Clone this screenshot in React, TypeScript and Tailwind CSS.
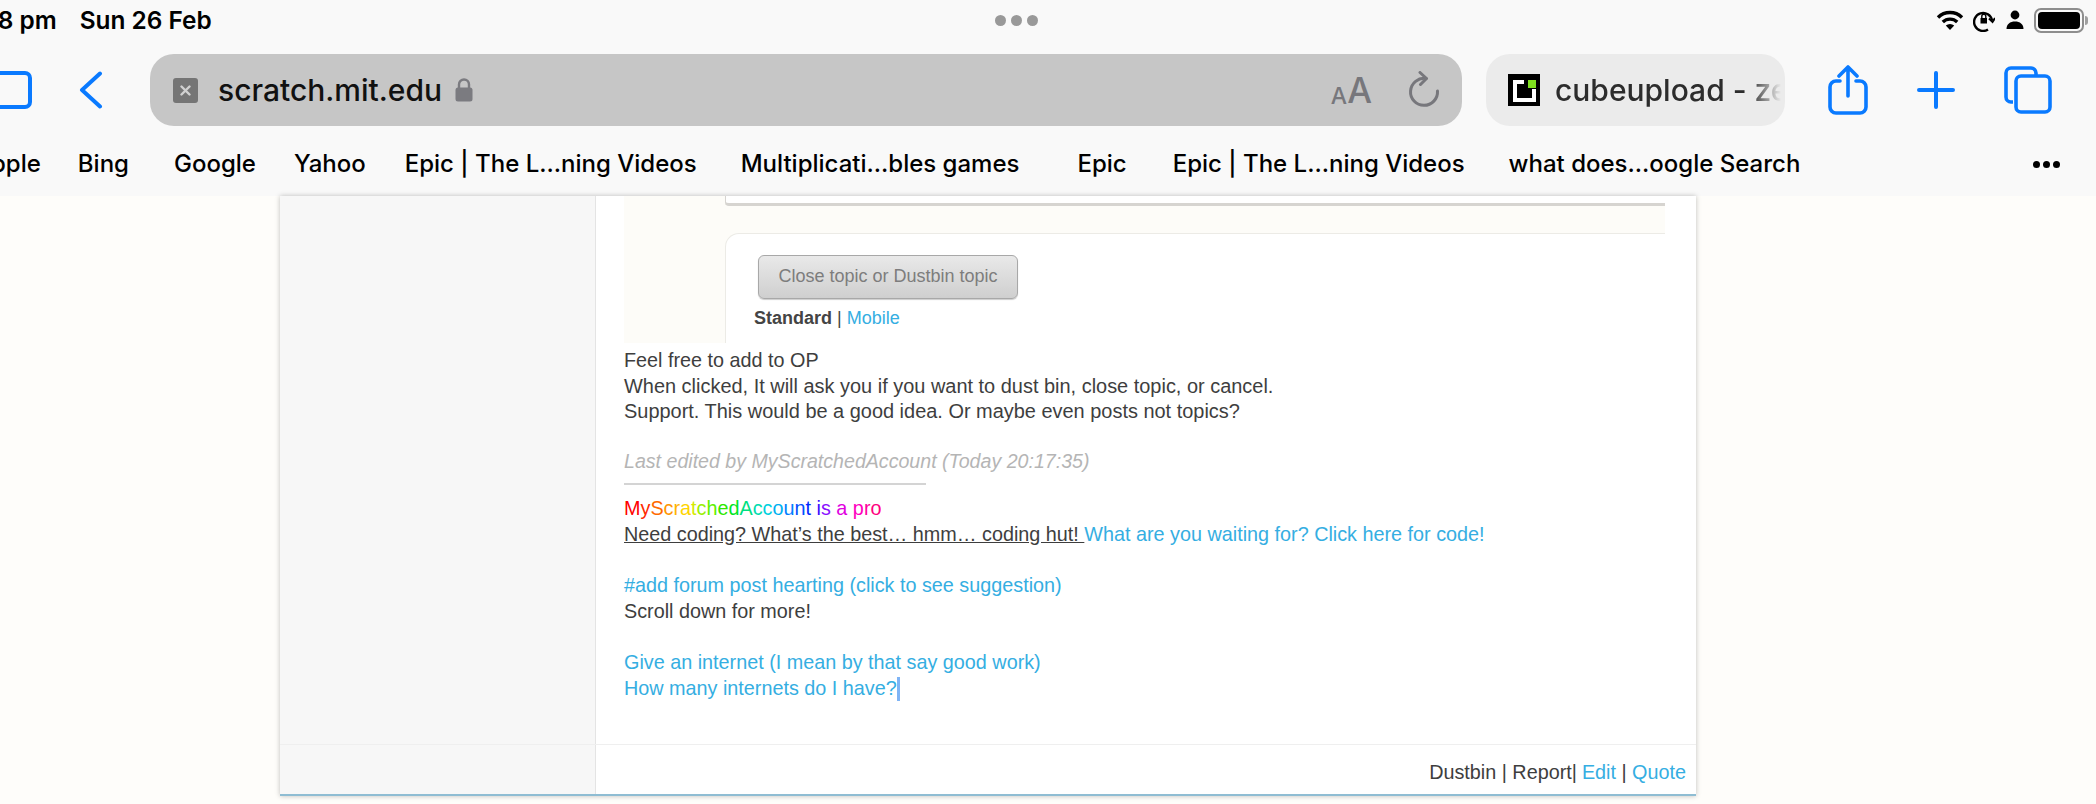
import React from 'react'

const blue = '#0a7aff'

// rainbow signature, one colour per letter
const rainbow: [string, string][] = [
    ['M', '#ff0000'], ['y', '#ff2a00'], ['S', '#ff6a00'], ['c', '#ff9500'], ['r', '#ffb400'], ['a', '#ffd500'], ['t', '#d5ea00'],
    ['c', '#9bf000'], ['h', '#5ff000'], ['e', '#2fe800'], ['d', '#00e61e'], ['A', '#00e080'], ['c', '#00dcb0'], ['c', '#00d0e0'],
    ['o', '#00b0f0'], ['u', '#0080ff'], ['n', '#0050ff'], ['t', '#0028ff'], [' ', '#000'], ['i', '#3a10ff'], ['s', '#8a10ff'],
    [' ', '#000'], ['a', '#e000e0'], [' ', '#000'], ['p', '#ff00c0'], ['r', '#ff00a0'], ['o', '#ff0080'],
]

const bookmarks = [
    { label: 'Bing', cls: 'ml-[37px]' },
    { label: 'Google', cls: 'ml-[45px]' },
    { label: 'Yahoo', cls: 'ml-[38px]' },
    { label: 'Epic | The L...ning Videos', cls: 'ml-[39px]' },
    { label: 'Multiplicati...bles games', cls: 'ml-[44px]' },
    { label: 'Epic', cls: 'ml-[58px]' },
    { label: 'Epic | The L...ning Videos', cls: 'ml-[46px]' },
    { label: 'what does...oogle Search', cls: 'ml-[44px]' },
]

function StatusBar() {
    return (
        <div className="relative flex h-[40px] items-center justify-between overflow-hidden">
            <div className="ml-[-36px] flex items-center gap-[23px] text-[24.4px] font-semibold text-black">
                <span>8:18 pm</span>
                <span>Sun 26 Feb</span>
            </div>
            <div className="absolute left-[995px] top-[15px] flex gap-[5px]">
                <span className="h-[11px] w-[11px] rounded-full bg-[#999]" />
                <span className="h-[11px] w-[11px] rounded-full bg-[#999]" />
                <span className="h-[11px] w-[11px] rounded-full bg-[#999]" />
            </div>
            <div className="mr-[8px] flex items-center">
                <svg width="28" height="22" viewBox="0 0 28 22" fill="none" stroke="black" strokeWidth="3.4" strokeLinecap="butt">
                    <path d="M2 8.5a17 17 0 0 1 24 0" />
                    <path d="M6.8 13a10.4 10.4 0 0 1 14.4 0" />
                    <path d="M14 21l-4.2-4.4a6 6 0 0 1 8.4 0z" fill="black" stroke="none" />
                </svg>
                <svg className="ml-[9px]" width="22" height="24" viewBox="0 0 22 24" fill="none" stroke="black" strokeWidth="2.4">
                    <path d="M15 21.5a9 9 0 1 1 4-9" />
                    <path d="M16 10.5l3.5 3.5 2.5-4" strokeWidth="2" />
                    <rect x="7.5" y="10" width="6.5" height="5.5" fill="black" stroke="none" />
                    <path d="M8.8 10V8.2a2 2 0 0 1 4 0V10" strokeWidth="1.4" />
                </svg>
                <svg className="ml-[11px]" width="18" height="20" viewBox="0 0 18 20" fill="black">
                    <circle cx="9" cy="5" r="4.4" />
                    <path d="M0.5 19c0-5 3.6-7.6 8.5-7.6s8.500 2.600 8.500 7.600z" />
                </svg>
                <div className="ml-[10px] flex items-center">
                    <div className="flex h-[25px] w-[50px] items-center rounded-[7px] border-2 border-[#8e8e8e] p-[2px]">
                        <div className="h-full w-full rounded-[4px] bg-black" />
                    </div>
                    <div className="ml-[1px] h-[9px] w-[3px] rounded-r-full bg-[#a0a0a0]" />
                </div>
            </div>
        </div>
    )
}

function CubeFavicon() {
    return (
        <svg width="32" height="32" viewBox="0 0 32 32" className="shrink-0">
            <rect width="32" height="32" fill="#000" />
            <path d="M16 8H7v18h19V15" fill="none" stroke="#fff" strokeWidth="4" />
            <rect x="20" y="6" width="8" height="8" fill="#7fe01f" />
        </svg>
    )
}

function AddressRow() {
    return (
        <div className="mt-[14px] flex h-[72px] items-center">
            <div className="ml-[-14px] h-[38px] w-[46px] rounded-[7px] border-[4px] border-[#0a7aff]" />
            <svg className="ml-[47px]" width="24" height="38" viewBox="0 0 24 38" fill="none" stroke={blue} strokeWidth="4" strokeLinecap="round" strokeLinejoin="round">
                <path d="M21 2.500 3 19l18 16.500" />
            </svg>
            <div className="ml-[47px] flex h-[72px] w-[1312px] items-center rounded-[24px] bg-[#c6c6c6] pl-[23px] pr-[22px]">
                <div className="flex h-[25px] w-[25px] items-center justify-center rounded-[3px] bg-[#757575]">
                    <svg width="11" height="11" viewBox="0 0 11 11" stroke="#d0d0d0" strokeWidth="2.4" strokeLinecap="round">
                        <path d="M1.500 1.500l8 8M9.500 1.500l-8 8" />
                    </svg>
                </div>
                <span className="ml-[20px] text-[30px] font-medium leading-none text-[#111]">scratch.mit.edu</span>
                <svg className="ml-[13px]" width="18" height="24" viewBox="0 0 18 24" fill="#7b7b80">
                    <rect x="0.500" y="9.500" width="17" height="14" rx="2.500" />
                    <path d="M4 10V6.500a5 5 0 0 1 10 0V10" fill="none" stroke="#7b7b80" strokeWidth="2.400" />
                </svg>
                <div className="ml-auto flex items-end font-medium leading-none text-[#77777c]">
                    <span className="text-[23px]">A</span>
                    <span className="text-[35px]">A</span>
                </div>
                <svg className="ml-[36px]" width="32" height="38" viewBox="0 0 32 38" fill="none" stroke="#77777c" strokeWidth="3" strokeLinecap="round" strokeLinejoin="round">
                    <path d="M18 7.500A13.500 13.500 0 1 0 29.500 20" />
                    <path d="M12 1.500l6.500 6-6 6" />
                </svg>
            </div>
            <div className="ml-[24px] flex h-[72px] w-[299px] items-center overflow-hidden rounded-[24px] bg-[#ebebeb] pl-[22px]">
                <CubeFavicon />
                <span className="ml-[15px] w-[226px] overflow-hidden whitespace-nowrap text-[30px] font-medium leading-[38px] text-[#2c2c2c] [mask-image:linear-gradient(to_right,black_86%,transparent_100%)]">cubeupload - zeq</span>
            </div>
            <svg className="ml-[43px]" width="40" height="50" viewBox="0 0 40 50" fill="none" stroke={blue} strokeWidth="3.600" strokeLinecap="round" strokeLinejoin="round">
                <path d="M12 16H8a6 6 0 0 0-6 6v20a6 6 0 0 0 6 6h24a6 6 0 0 0 6-6V22a6 6 0 0 0-6-6h-4" />
                <path d="M20 31V3M11 11l9-9 9 9" />
            </svg>
            <svg className="ml-[49px]" width="38" height="38" viewBox="0 0 38 38" stroke={blue} strokeWidth="4" strokeLinecap="round">
                <path d="M19 2v34M2 19h34" />
            </svg>
            <svg className="ml-[49px]" width="48" height="48" viewBox="0 0 48 48" fill="none" stroke={blue} strokeWidth="3.600" strokeLinejoin="round">
                <path d="M9 36H7a5 5 0 0 1-5-5V7a5 5 0 0 1 5-5h20a5 5 0 0 1 5 5v3" />
                <rect x="12" y="10" width="34" height="36" rx="5" />
            </svg>
        </div>
    )
}

function BookmarkRow() {
    return (
        <div className="flex h-[70px] items-center overflow-hidden pt-[6px] text-[24px] font-medium text-black">
            <span className="ml-[-26px]">Apple</span>
            {bookmarks.map((b, i) => (
                <span key={i} className={`${b.cls} whitespace-nowrap`}>{b.label}</span>
            ))}
            <div className="ml-auto mr-[36px] flex gap-[3px]">
                <span className="h-[7px] w-[7px] rounded-full bg-black" />
                <span className="h-[7px] w-[7px] rounded-full bg-black" />
                <span className="h-[7px] w-[7px] rounded-full bg-black" />
            </div>
        </div>
    )
}

// the screenshot embedded in the forum post
function PostImage() {
    return (
        <div className="h-[147px] w-[1041px] overflow-hidden bg-[#fdfcf8] pl-[101px]">
            <div className="h-[10px] rounded-bl-[4px] border-b-[3px] border-l border-[#d6d4d0] bg-white" />
            <div className="mt-[27px] h-[120px] rounded-tl-[14px] border-l border-t border-[#ecebe6] bg-white pl-[32px] pt-[21px]">
                <div className="flex h-[44px] w-[260px] items-center justify-center rounded-[6px] border border-[#a8a8a8] bg-gradient-to-b from-[#e9e9e9] to-[#cfcfcf] text-[18px] text-[#7d7d7d] shadow-[0_1px_1px_rgba(0,0,0,0.2)]">
                    Close topic or Dustbin topic
                </div>
                <div className="ml-[-4px] mt-[7px] text-[18px] leading-[24px] text-[#444]">
                    <span className="font-bold">Standard</span> | <span className="text-[#35aee2]">Mobile</span>
                </div>
            </div>
        </div>
    )
}

export default function App() {
    return (
        <div className="h-[804px] w-[2096px] overflow-hidden bg-[#fefdfa] font-['Inter','Liberation_Sans',sans-serif]">
            <div className="h-[196px] bg-[#f9f9f9]">
                <StatusBar />
                <AddressRow />
                <BookmarkRow />
            </div>
            <main className="ml-[280px] flex h-[600px] w-[1416px] flex-col border-b-2 border-[#8fbdd3] bg-white font-['Liberation_Sans',sans-serif] text-[19.8px] leading-[25.7px] text-[#3e3e3e] shadow-[0_0_5px_rgba(0,0,0,0.25)]">
                <div className="flex h-[549px] border-b border-[#efefef]">
                    <div className="w-[316px] border-r border-[#e4e4e4] bg-[#f7f7f7]" />
                    <div className="flex-1 pl-[28px]">
                        <PostImage />
                        <div className="mt-[5px]">
                            <div>Feel free to add to OP</div>
                            <div className="text-[19.95px]">When clicked, It will ask you if you want to dust bin, close topic, or cancel.</div>
                            <div className="text-[19.95px]">Support. This would be a good idea. Or maybe even posts not topics?</div>
                            <div className="mt-[24px] text-[19.6px] italic text-[#b5b5b5]">Last edited by MyScratchedAccount (Today 20:17:35)</div>
                            <div className="mt-[8px] h-[2px] w-[302px] bg-[#d4d4d4]" />
                            <div className="mt-[11px]">
                                {rainbow.map(([c, color], i) => (
                                    <span key={i} style={{ color }}>{c}</span>
                                ))}
                            </div>
                            <div>
                                <span className="underline">Need coding? What’s the best… hmm… coding hut! </span>
                                <span className="text-[#35aee2]">What are you waiting for? Click here for code!</span>
                            </div>
                            <div className="mt-[25.700px] text-[#35aee2]">#add forum post hearting (click to see suggestion)</div>
                            <div>Scroll down for more!</div>
                            <div className="mt-[25.700px] text-[#35aee2]">Give an internet (I mean by that say good work)</div>
                            <div className="flex items-center text-[#35aee2]">
                                How many internets do I have?
                                <span className="h-[24px] w-[3px] bg-[#7fb4f5]" />
                            </div>
                        </div>
                    </div>
                </div>
                <div className="flex flex-1">
                    <div className="w-[316px] border-r border-[#e4e4e4] bg-[#f7f7f7]" />
                    <div className="flex flex-1 items-center justify-end pr-[10px] pt-[6px]">
                        Dustbin | Report| <span className="ml-[5px] text-[#35aee2]">Edit</span>&nbsp;|&nbsp;<span className="text-[#35aee2]">Quote</span>
                    </div>
                </div>
            </main>
        </div>
    )
}
